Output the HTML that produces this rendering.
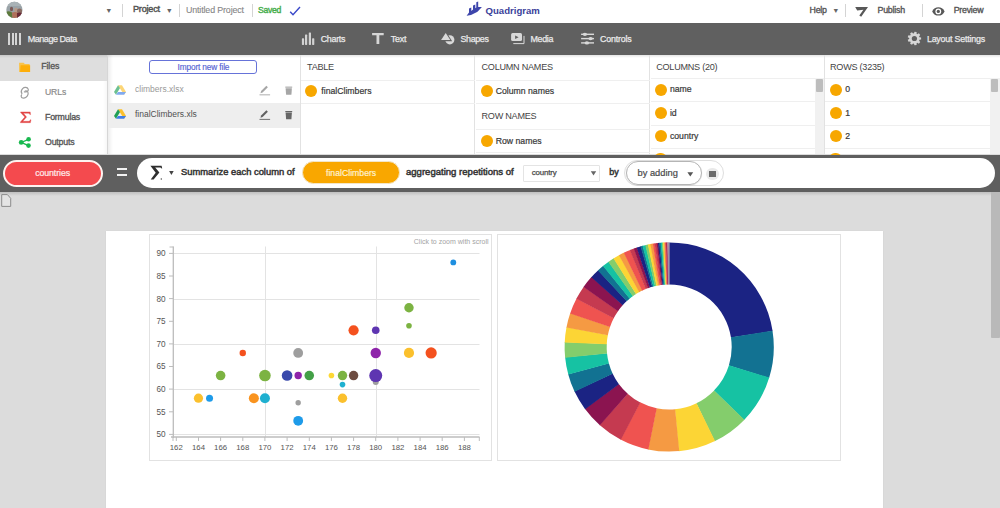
<!DOCTYPE html>
<html><head><meta charset="utf-8">
<style>
*{margin:0;padding:0;box-sizing:border-box}
html,body{width:1000px;height:508px;overflow:hidden;background:#dcdcdc;font-family:"Liberation Sans",sans-serif;position:relative}
.a{position:absolute}
.t{position:absolute;white-space:nowrap;line-height:1}
svg{position:absolute;overflow:visible}
</style></head><body>
<div class="a" style="left:0px;top:0px;width:1000px;height:23px;background:#fff"></div>
<svg style="left:0;top:0" width="40" height="24"><defs><clipPath id="av"><circle cx="14.4" cy="9.9" r="8.1"/></clipPath></defs><g clip-path="url(#av)"><rect x="5" y="1" width="19" height="18" fill="#9aa3a8"/><rect x="5" y="1" width="19" height="5" fill="#a9b2b6"/><ellipse cx="11.5" cy="9" rx="1.6" ry="2.2" fill="#7a5a58"/><ellipse cx="16" cy="10" rx="1.8" ry="2.2" fill="#b89a88"/><ellipse cx="19.5" cy="11" rx="2.5" ry="2.5" fill="#8a6a60"/><path d="M5 12 Q9 10.5 12 12.5 L13 19 H5 Z" fill="#5d7a3c"/><path d="M12 12.5 Q15 11.5 18 12.5 L18 19 H12.5 Z" fill="#b0705a"/><path d="M17 13 Q20 12 23 13.5 V19 H17 Z" fill="#6a2a35"/></g></svg>
<div class="t" style="left:105.30px;top:7.20px;font-size:7.2px;color:#666;font-weight:normal;">&#9660;</div>
<div class="a" style="left:122px;top:4px;width:1px;height:13px;background:#d4d4d4"></div>
<div class="t" style="left:133.00px;top:5.39px;font-size:9.1px;color:#555;font-weight:normal;-webkit-text-stroke:0.45px #555;letter-spacing:-0.2px">Project</div>
<div class="t" style="left:165.80px;top:7.40px;font-size:7.2px;color:#666;font-weight:normal;">&#9660;</div>
<div class="a" style="left:179px;top:4px;width:1px;height:13px;background:#d4d4d4"></div>
<div class="t" style="left:186.00px;top:5.70px;font-size:8.85px;color:#858585;font-weight:normal;letter-spacing:-0.13px;-webkit-text-stroke:0.1px #858585">Untitled Project</div>
<div class="a" style="left:252px;top:4px;width:1px;height:13px;background:#d4d4d4"></div>
<div class="t" style="left:258.00px;top:6.42px;font-size:8.6px;color:#45ad4a;font-weight:normal;-webkit-text-stroke:0.4px #45ad4a;letter-spacing:-0.25px">Saved</div>
<svg style="left:289px;top:6px" width="12" height="10" viewBox="0 0 12 10"><path d="M1.2 5.8 L4 8.8 L11 1" fill="none" stroke="#3a49c9" stroke-width="1.4"/></svg>
<svg style="left:0;top:0" width="1000" height="508"><path d="M466.6 15.7 L469 12.6 V8.4 L471.3 7.6 V10.9 L473 9.6 V5.6 L475.3 4.6 V8.3 L476.3 7.4 V2.3 L478.2 1.5 V7 L481.9 7.1 L477.5 11.8 L471 15 Z" fill="#3d45ab"/></svg>
<div class="t" style="left:485.50px;top:6.37px;font-size:9.6px;color:#3b3f9a;font-weight:bold;">Quadrigram</div>
<div class="t" style="left:809.50px;top:5.75px;font-size:8.8px;color:#555;font-weight:normal;-webkit-text-stroke:0.35px #555;letter-spacing:-0.2px">Help</div>
<div class="t" style="left:832.30px;top:7.40px;font-size:7.2px;color:#666;font-weight:normal;">&#9660;</div>
<div class="a" style="left:845px;top:4px;width:1px;height:13px;background:#d4d4d4"></div>
<svg style="left:0;top:0" width="1000" height="508"><path d="M855.2 7.1 L868 7.1 L861.2 16.8 L859.3 15.4 L863.4 9.7 L857.2 10.6 Z" fill="#585858"/></svg>
<div class="t" style="left:877.50px;top:5.75px;font-size:8.8px;color:#555;font-weight:normal;-webkit-text-stroke:0.35px #555;letter-spacing:-0.2px">Publish</div>
<div class="a" style="left:922px;top:4px;width:1px;height:13px;background:#d4d4d4"></div>
<svg style="left:0;top:0" width="1000" height="508"><path d="M932.2 11.4 C934.5 5.8 942.2 5.8 944.6 11.4 C942.2 17 934.5 17 932.2 11.4 Z" fill="#585858"/><circle cx="938.3" cy="11.4" r="2.9" fill="#fff"/><circle cx="938.3" cy="11.4" r="1.6" fill="#585858"/></svg>
<div class="t" style="left:953.75px;top:5.75px;font-size:8.8px;color:#555;font-weight:normal;-webkit-text-stroke:0.35px #555;letter-spacing:-0.25px">Preview</div>
<div class="a" style="left:0px;top:23px;width:1000px;height:32px;background:#606060"></div>
<div class="a" style="left:8.2px;top:33px;width:1.9px;height:12.2px;background:#d4d4d4"></div>
<div class="a" style="left:12.0px;top:33px;width:1.9px;height:12.2px;background:#d4d4d4"></div>
<div class="a" style="left:15.3px;top:33px;width:1.9px;height:12.2px;background:#d4d4d4"></div>
<div class="a" style="left:18.9px;top:33px;width:1.9px;height:12.2px;background:#d4d4d4"></div>
<div class="t" style="left:27.70px;top:34.98px;font-size:9.0px;color:#ececec;font-weight:normal;-webkit-text-stroke:0.25px #e8e8e8;letter-spacing:-0.45px">Manage Data</div>
<svg style="left:0;top:0" width="1000" height="508"><g fill="#d2d2d2"><rect x="301.9" y="38.3" width="2.2" height="6.6" rx="0.6"/><rect x="305" y="34.6" width="2.2" height="10.3" rx="0.6"/><rect x="308.8" y="32.4" width="2.2" height="12.5" rx="0.6"/><rect x="312.1" y="38.3" width="2.2" height="6.6" rx="0.6"/></g></svg>
<div class="t" style="left:320.75px;top:35.06px;font-size:8.9px;color:#ececec;font-weight:normal;-webkit-text-stroke:0.25px #e8e8e8;letter-spacing:-0.3px">Charts</div>
<svg style="left:372px;top:32px" width="12" height="13" viewBox="0 0 12 13"><path d="M0.1 1 H11.7 V3.3 H7.3 V11.9 H4.5 V3.3 H0.1 Z" fill="#d6d6d6"/></svg>
<div class="t" style="left:390.75px;top:35.06px;font-size:8.9px;color:#ececec;font-weight:normal;-webkit-text-stroke:0.25px #e8e8e8;letter-spacing:-0.2px">Text</div>
<svg style="left:0;top:0" width="1000" height="508"><defs><mask id="shm"><rect x="430" y="25" width="40" height="30" fill="#fff"/><path d="M445.7 31.2 L439.2 41.3 H452.2 Z" fill="#000"/></mask></defs><path d="M445.7 32.9 L441.1 39.9 H450.3 Z" fill="#d9d9d9"/><circle cx="449.8" cy="39.8" r="4.6" fill="#d9d9d9" mask="url(#shm)"/></svg>
<div class="t" style="left:460.50px;top:35.06px;font-size:8.9px;color:#ececec;font-weight:normal;-webkit-text-stroke:0.25px #e8e8e8;letter-spacing:-0.35px">Shapes</div>
<svg style="left:0;top:0" width="1000" height="508"><rect x="511.1" y="33.1" width="10.9" height="7.9" rx="1.5" fill="#d9d9d9"/><path d="M515.1 35.6 L518.6 37.3 L515.1 39.1 Z" fill="#606060"/><path d="M524 35.9 V43.6 H513.3" fill="none" stroke="#d9d9d9" stroke-width="1"/></svg>
<div class="t" style="left:530.50px;top:35.06px;font-size:8.9px;color:#ececec;font-weight:normal;-webkit-text-stroke:0.25px #e8e8e8;letter-spacing:-0.3px">Media</div>
<svg style="left:0;top:0" width="1000" height="508"><g fill="#d9d9d9"><rect x="581.1" y="33.6" width="12.9" height="1.4"/><rect x="581.1" y="37.9" width="12.9" height="1.4"/><rect x="581.1" y="42.2" width="12.9" height="1.4"/><ellipse cx="584.9" cy="34.3" rx="2.2" ry="1.6"/><ellipse cx="590.6" cy="38.6" rx="2.2" ry="1.6"/><ellipse cx="586.9" cy="42.9" rx="2.2" ry="1.6"/></g></svg>
<div class="t" style="left:600.00px;top:35.06px;font-size:8.9px;color:#ececec;font-weight:normal;-webkit-text-stroke:0.25px #e8e8e8;letter-spacing:-0.2px">Controls</div>
<svg style="left:0;top:0" width="1000" height="508"><path d="M919.43 37.16 L921.11 37.42 L921.11 39.58 L919.43 39.84 L919.11 40.71 L920.24 41.99 L918.85 43.65 L917.39 42.75 L916.59 43.22 L916.63 44.92 L914.50 45.30 L913.96 43.68 L913.05 43.52 L911.98 44.86 L910.11 43.77 L910.73 42.18 L910.14 41.47 L908.46 41.81 L907.72 39.78 L909.22 38.96 L909.22 38.04 L907.72 37.22 L908.46 35.19 L910.14 35.53 L910.73 34.82 L910.11 33.23 L911.98 32.14 L913.05 33.48 L913.96 33.32 L914.50 31.70 L916.63 32.08 L916.59 33.78 L917.39 34.25 L918.85 33.35 L920.24 35.01 L919.11 36.29Z" fill="#d6d6d6"/><circle cx="914.4" cy="38.5" r="2.6" fill="#606060"/></svg>
<div class="t" style="left:926.90px;top:35.06px;font-size:8.9px;color:#ececec;font-weight:normal;-webkit-text-stroke:0.25px #e8e8e8;letter-spacing:-0.2px">Layout Settings</div>
<div class="a" style="left:0px;top:55px;width:1000px;height:99px;background:#fff"></div>
<div class="a" style="left:0px;top:55px;width:107px;height:26px;background:#dedede"></div>
<div class="a" style="left:0px;top:55px;width:1000px;height:3px;background:linear-gradient(180deg,rgba(0,0,0,0.10),rgba(0,0,0,0))"></div>
<div class="a" style="left:107px;top:55px;width:1px;height:99px;background:#d6d6d6"></div>
<div class="a" style="left:108px;top:55px;width:5px;height:99px;background:linear-gradient(90deg,rgba(0,0,0,0.07),rgba(0,0,0,0))"></div>
<div class="a" style="left:103px;top:81px;width:4px;height:73px;background:linear-gradient(90deg,rgba(0,0,0,0),rgba(0,0,0,0.03))"></div>
<svg style="left:0;top:0" width="40" height="100"><path d="M19.1 62.7 H23.6 L24.8 64 H29.6 V72 H19.1 Z" fill="#f9c34a"/><path d="M20.6 65.3 H30.1 V72 H20.1 Z" fill="#fdae0a"/></svg>
<div class="t" style="left:41.20px;top:62.35px;font-size:8.8px;color:#575757;font-weight:normal;-webkit-text-stroke:0.35px #575757;letter-spacing:-0.1px">Files</div>
<svg style="left:0;top:0" width="40" height="120"><g fill="none" stroke="#9e9e9e" stroke-width="1.2" stroke-linecap="round"><path d="M21.9 93.6 C20.9 92.2 21.3 90 22.6 88.6 C24.3 86.8 27.4 87 28.2 89.1 C28.7 90.5 27.6 91.8 25.6 91.9 L24.3 91.8"/><path d="M25.2 91 C26.9 90.6 28.6 91.9 28.1 94.2 C27.6 96.7 24.9 98.6 22.6 98 C21 97.5 20.9 95.8 21.6 94.8"/></g></svg>
<div class="t" style="left:45.00px;top:88.12px;font-size:8.6px;color:#8a8a8a;font-weight:normal;-webkit-text-stroke:0.2px #8a8a8a;letter-spacing:-0.1px">URLs</div>
<svg style="left:0;top:0" width="1000" height="508"><path d="M20.6 111.9 H30.2 L30.6 114.6 H29.9 C29.6 113.6 29 113.3 28 113.3 H23.4 L26.6 117.1 L22.8 121.3 H28.3 C29.3 121.3 29.9 120.8 30.3 119.8 H31 L30.4 122.7 H20.4 V122 L24.8 117.1 L20.6 112.6 Z" fill="#e24545" stroke="#e24545" stroke-width="0.35"/></svg>
<div class="t" style="left:45.00px;top:112.95px;font-size:8.8px;color:#575757;font-weight:normal;-webkit-text-stroke:0.35px #575757;letter-spacing:-0.2px">Formulas</div>
<svg style="left:0;top:0" width="40" height="160"><g fill="#19b94f"><circle cx="28.6" cy="139.3" r="2.3"/><circle cx="21.2" cy="142.4" r="2.4"/><circle cx="28.5" cy="145.6" r="2.3"/></g><path d="M28.6 139.3 L21.2 142.4 L28.5 145.6" fill="none" stroke="#19b94f" stroke-width="1.3"/></svg>
<div class="t" style="left:45.00px;top:137.75px;font-size:8.8px;color:#575757;font-weight:normal;-webkit-text-stroke:0.35px #575757;letter-spacing:-0.2px">Outputs</div>
<div class="a" style="left:149px;top:60px;width:108.3px;height:13.6px;border:1.3px solid #6673d9;border-radius:3px"></div>
<div class="t" style="left:177.60px;top:62.77px;font-size:8.3px;color:#5563d3;font-weight:normal;letter-spacing:-0.15px;-webkit-text-stroke:0.15px #5563d3">Import new file</div>
<div class="a" style="left:108px;top:102.8px;width:192px;height:25.2px;background:#eeeeee"></div>
<svg style="left:114px;top:84.5px;opacity:0.65" width="12" height="10" viewBox="0 0 12 10"><path d="M4 0.3 H8 L12 7 L10 9.7 Z" fill="#fbc02d"/><path d="M4 0.3 L0 7 L2 9.7 L6 3 Z" fill="#1e9f55"/><path d="M2 9.7 H10 L12 7 H4 Z" fill="#3f7ee8"/></svg>
<div class="t" style="left:135.00px;top:84.80px;font-size:8.5px;color:#9a9a9a;font-weight:normal;">climbers.xlsx</div>
<svg style="left:114px;top:108.5px;opacity:1" width="12" height="10" viewBox="0 0 12 10"><path d="M4 0.3 H8 L12 7 L10 9.7 Z" fill="#fbc02d"/><path d="M4 0.3 L0 7 L2 9.7 L6 3 Z" fill="#1e9f55"/><path d="M2 9.7 H10 L12 7 H4 Z" fill="#3f7ee8"/></svg>
<div class="t" style="left:135.00px;top:109.60px;font-size:8.5px;color:#505050;font-weight:normal;">finalClimbers.xls</div>
<svg style="left:0;top:0" width="300" height="140"><path d="M261.1 91.1 L266.4 85.8 L267.9 87.3 L262.6 92.6 L260.5 93.2 Z" fill="#a6a6a6"/><rect x="259.5" y="94.39999999999999" width="10.6" height="0.9" fill="#a6a6a6"/></svg>
<svg style="left:0;top:0" width="300" height="140"><rect x="285.3" y="86.6" width="6.9" height="1.1" fill="#a6a6a6"/><path d="M285.6 88.19999999999999 H291.90000000000003 L291.40000000000003 94.8 H286.1 Z" fill="#a6a6a6"/></svg>
<svg style="left:0;top:0" width="300" height="140"><path d="M261.1 115.6 L266.4 110.3 L267.9 111.8 L262.6 117.1 L260.5 117.7 Z" fill="#616161"/><rect x="259.5" y="118.89999999999999" width="10.6" height="0.9" fill="#616161"/></svg>
<svg style="left:0;top:0" width="300" height="140"><rect x="285.3" y="111" width="6.9" height="1.1" fill="#666"/><path d="M285.6 112.6 H291.90000000000003 L291.40000000000003 119.2 H286.1 Z" fill="#666"/></svg>
<div class="a" style="left:300px;top:55px;width:1px;height:99px;background:#e2e2e2"></div>
<div class="a" style="left:474px;top:55px;width:1px;height:99px;background:#e2e2e2"></div>
<div class="a" style="left:649px;top:55px;width:1px;height:99px;background:#e2e2e2"></div>
<div class="a" style="left:824px;top:55px;width:1px;height:99px;background:#e2e2e2"></div>
<div class="t" style="left:307.00px;top:62.99px;font-size:9.1px;color:#444;font-weight:normal;letter-spacing:-0.25px">TABLE</div>
<div class="a" style="left:301px;top:79.5px;width:173.5px;height:1px;background:#efefef"></div>
<div class="a" style="left:305.3px;top:85.2px;width:12px;height:12px;border-radius:50%;background:#f7a700"></div>
<div class="t" style="left:321.30px;top:87.03px;font-size:8.7px;color:#383838;font-weight:normal;-webkit-text-stroke:0.2px #383838">finalClimbers</div>
<div class="a" style="left:301px;top:103.3px;width:173.5px;height:1px;background:#efefef"></div>
<div class="t" style="left:481.50px;top:62.99px;font-size:9.1px;color:#444;font-weight:normal;letter-spacing:-0.25px">COLUMN NAMES</div>
<div class="a" style="left:475.5px;top:79.5px;width:174px;height:1px;background:#efefef"></div>
<div class="a" style="left:480.5px;top:85.2px;width:12px;height:12px;border-radius:50%;background:#f7a700"></div>
<div class="t" style="left:495.70px;top:87.03px;font-size:8.7px;color:#383838;font-weight:normal;-webkit-text-stroke:0.2px #383838">Column names</div>
<div class="a" style="left:475.5px;top:103.3px;width:174px;height:1px;background:#efefef"></div>
<div class="t" style="left:481.50px;top:112.49px;font-size:9.1px;color:#444;font-weight:normal;letter-spacing:-0.25px">ROW NAMES</div>
<div class="a" style="left:475.5px;top:129.1px;width:174px;height:1px;background:#efefef"></div>
<div class="a" style="left:480.5px;top:135.2px;width:12px;height:12px;border-radius:50%;background:#f7a700"></div>
<div class="t" style="left:495.70px;top:136.93px;font-size:8.7px;color:#383838;font-weight:normal;-webkit-text-stroke:0.2px #383838">Row names</div>
<div class="a" style="left:475.5px;top:152.3px;width:174px;height:1px;background:#efefef"></div>
<div class="t" style="left:656.20px;top:62.99px;font-size:9.1px;color:#444;font-weight:normal;letter-spacing:-0.25px">COLUMNS (20)</div>
<div class="a" style="left:650.5px;top:77.8px;width:173.5px;height:1px;background:#efefef"></div>
<div class="a" style="left:654.5px;top:83.6px;width:12px;height:12px;border-radius:50%;background:#f7a700"></div>
<div class="t" style="left:669.90px;top:85.43px;font-size:8.7px;color:#383838;font-weight:normal;-webkit-text-stroke:0.2px #383838">name</div>
<div class="a" style="left:650.5px;top:101.1px;width:165px;height:1px;background:#efefef"></div>
<div class="a" style="left:654.5px;top:107.0px;width:12px;height:12px;border-radius:50%;background:#f7a700"></div>
<div class="t" style="left:669.90px;top:108.83px;font-size:8.7px;color:#383838;font-weight:normal;-webkit-text-stroke:0.2px #383838">id</div>
<div class="a" style="left:650.5px;top:124.5px;width:165px;height:1px;background:#efefef"></div>
<div class="a" style="left:654.5px;top:130.4px;width:12px;height:12px;border-radius:50%;background:#f7a700"></div>
<div class="t" style="left:669.90px;top:132.23px;font-size:8.7px;color:#383838;font-weight:normal;-webkit-text-stroke:0.2px #383838">country</div>
<div class="a" style="left:650.5px;top:147.9px;width:165px;height:1px;background:#efefef"></div>
<div class="a" style="left:654.2px;top:152.5px;width:12.6px;height:12.6px;border-radius:50%;background:#f6a800"></div>
<div class="a" style="left:815px;top:78px;width:9px;height:76px;background:#f1f1f1"></div>
<div class="a" style="left:815.5px;top:79px;width:7.5px;height:12.5px;background:#bdbdbd;border-radius:1px"></div>
<div class="t" style="left:830.00px;top:62.99px;font-size:9.1px;color:#444;font-weight:normal;letter-spacing:-0.25px">ROWS (3235)</div>
<div class="a" style="left:825px;top:77.8px;width:175px;height:1px;background:#efefef"></div>
<div class="a" style="left:829.6999999999999px;top:83.6px;width:12px;height:12px;border-radius:50%;background:#f7a700"></div>
<div class="t" style="left:845.20px;top:85.43px;font-size:8.7px;color:#383838;font-weight:normal;-webkit-text-stroke:0.2px #383838">0</div>
<div class="a" style="left:825px;top:101.1px;width:165px;height:1px;background:#efefef"></div>
<div class="a" style="left:829.6999999999999px;top:107.0px;width:12px;height:12px;border-radius:50%;background:#f7a700"></div>
<div class="t" style="left:845.20px;top:108.83px;font-size:8.7px;color:#383838;font-weight:normal;-webkit-text-stroke:0.2px #383838">1</div>
<div class="a" style="left:825px;top:124.5px;width:165px;height:1px;background:#efefef"></div>
<div class="a" style="left:829.6999999999999px;top:130.4px;width:12px;height:12px;border-radius:50%;background:#f7a700"></div>
<div class="t" style="left:845.20px;top:132.23px;font-size:8.7px;color:#383838;font-weight:normal;-webkit-text-stroke:0.2px #383838">2</div>
<div class="a" style="left:825px;top:147.9px;width:165px;height:1px;background:#efefef"></div>
<div class="a" style="left:829.4px;top:152.5px;width:12.6px;height:12.6px;border-radius:50%;background:#f6a800"></div>
<div class="a" style="left:990px;top:78px;width:10px;height:76px;background:#f1f1f1"></div>
<div class="a" style="left:990.5px;top:79px;width:7.5px;height:12.5px;background:#bdbdbd;border-radius:1px"></div>
<div class="a" style="left:0px;top:191.5px;width:1000px;height:4px;background:linear-gradient(180deg,rgba(0,0,0,0.13),rgba(0,0,0,0))"></div>
<div class="a" style="left:0px;top:154.5px;width:1000px;height:37px;background:#5f5f5f"></div>
<div class="a" style="left:2.5px;top:160px;width:100.5px;height:26.5px;border-radius:14px;background:#f44a4e;border:2.2px solid #fdf2ef"></div>
<div class="t" style="left:35.20px;top:168.55px;font-size:8.8px;color:#ffecec;font-weight:normal;-webkit-text-stroke:0.2px #ffecec;letter-spacing:-0.1px">countries</div>
<div class="a" style="left:116.5px;top:168px;width:10.5px;height:2.2px;background:#f2f2f2"></div>
<div class="a" style="left:116.5px;top:173.6px;width:10.5px;height:2.2px;background:#f2f2f2"></div>
<div class="a" style="left:136.5px;top:158.3px;width:858.7px;height:29.8px;border-radius:15px;background:#fff"></div>
<svg style="left:0;top:0" width="1000" height="508"><path d="M150.4 165.7 H161.6 L162.2 168.6 H161.5 C161.2 167.6 160.6 167.4 159.5 167.4 H155.2 L159.4 172.6 L153.6 179.5 H150.7 L155.7 172.8 Z" fill="#2e2e2e"/><circle cx="161.3" cy="179" r="0.7" fill="#444"/><path d="M169.1 171 H173.7 L171.4 175.1 Z" fill="#444"/></svg>
<div class="t" style="left:181.00px;top:167.34px;font-size:9.4px;color:#363636;font-weight:normal;-webkit-text-stroke:0.5px #363636">Summarize each column of</div>
<div class="a" style="left:301.5px;top:160.5px;width:98.5px;height:23px;border-radius:12px;background:#f9a700;border:1.2px solid #f3e6c8"></div>
<div class="t" style="left:326.00px;top:168.63px;font-size:8.7px;color:#fff2d0;font-weight:normal;-webkit-text-stroke:0.2px #fff2d0">finalClimbers</div>
<div class="t" style="left:406.00px;top:167.21px;font-size:9.55px;color:#363636;font-weight:normal;-webkit-text-stroke:0.5px #363636">aggregating repetitions of</div>
<div class="a" style="left:523px;top:164.5px;width:76.5px;height:17px;background:#fff;border:1px solid #e4e4e4;border-radius:1px"></div>
<div class="t" style="left:531.70px;top:169.11px;font-size:7.9px;color:#4a4a4a;font-weight:normal;-webkit-text-stroke:0.25px #4a4a4a;letter-spacing:-0.15px">country</div>
<svg style="left:0;top:0" width="1000" height="508"><path d="M590.8 171.3 H596.2 L593.5 175.5 Z" fill="#666"/><path d="M687.4 172.3 H693.2 L690.3 176.4 Z" fill="#555"/></svg>
<div class="t" style="left:609.20px;top:167.68px;font-size:9.0px;color:#363636;font-weight:normal;-webkit-text-stroke:0.5px #363636">by</div>
<div class="a" style="left:624px;top:159.5px;width:100px;height:26px;border-radius:13px;background:#fff;border:1px solid #dedede"></div>
<div class="a" style="left:625.8px;top:160.5px;width:76.5px;height:24px;border-radius:12px;background:#fff;border:1px solid #b5b5b5;box-shadow:0 0.5px 1px rgba(0,0,0,0.12)"></div>
<div class="t" style="left:637.50px;top:168.72px;font-size:9.3px;color:#4a4a4a;font-weight:normal;-webkit-text-stroke:0.2px #4a4a4a">by adding</div>
<svg style="left:0;top:0" width="1000" height="508"><path d="M687.4 172.3 H693.2 L690.3 176.4 Z" fill="#555"/></svg>
<div class="a" style="left:706px;top:167.5px;width:12.5px;height:12.5px;border-radius:50%;background:#e9e9e9"></div>
<div class="a" style="left:709px;top:170.5px;width:6.5px;height:6.5px;background:#6a6a6a"></div>
<svg style="left:0;top:0" width="40" height="240"><path d="M1.7 194.6 H7.4 L10.7 198.3 V206.4 H1.7 Z" fill="#e4e4e4" stroke="#8c8c8c" stroke-width="1"/></svg>
<div class="a" style="left:991.3px;top:192px;width:8.7px;height:145.7px;background:#b9b9b9;border-radius:0 0 1px 1px"></div>
<div class="a" style="left:106px;top:231px;width:777px;height:278px;background:#fff;box-shadow:0 -0.5px 1.5px rgba(0,0,0,0.08)"></div>
<div class="a" style="left:148.5px;top:234px;width:343.5px;height:226.5px;background:#fff;border:1px solid #e2e2e2"></div>
<div class="a" style="left:496.5px;top:234px;width:344px;height:226.5px;background:#fff;border:1px solid #e2e2e2"></div>
<svg style="left:0;top:0" width="1000" height="508"><line x1="173" y1="434.5" x2="479.5" y2="434.5" stroke="#e3e3e3" stroke-width="1"/><line x1="173" y1="389.5" x2="479.5" y2="389.5" stroke="#e3e3e3" stroke-width="1"/><line x1="173" y1="344.5" x2="479.5" y2="344.5" stroke="#e3e3e3" stroke-width="1"/><line x1="173" y1="299.5" x2="479.5" y2="299.5" stroke="#e3e3e3" stroke-width="1"/><line x1="173" y1="253.5" x2="479.5" y2="253.5" stroke="#e3e3e3" stroke-width="1"/><line x1="265.5" y1="246.5" x2="265.5" y2="437" stroke="#e3e3e3" stroke-width="1"/><line x1="376.5" y1="246.5" x2="376.5" y2="437" stroke="#e3e3e3" stroke-width="1"/><line x1="173.3" y1="246.5" x2="173.3" y2="438" stroke="#bcbcbc" stroke-width="1.3"/><line x1="169.5" y1="247" x2="173.5" y2="247" stroke="#bcbcbc" stroke-width="1"/><line x1="171" y1="437" x2="479.5" y2="437" stroke="#bcbcbc" stroke-width="1.3"/><line x1="169" y1="434.4" x2="173" y2="434.4" stroke="#bcbcbc" stroke-width="1"/><text x="165.6" y="437.3" text-anchor="end" font-size="8.2" fill="#555" font-family="Liberation Sans">50</text><line x1="169" y1="411.8" x2="173" y2="411.8" stroke="#bcbcbc" stroke-width="1"/><text x="165.6" y="414.7" text-anchor="end" font-size="8.2" fill="#555" font-family="Liberation Sans">55</text><line x1="169" y1="389.1" x2="173" y2="389.1" stroke="#bcbcbc" stroke-width="1"/><text x="165.6" y="392.0" text-anchor="end" font-size="8.2" fill="#555" font-family="Liberation Sans">60</text><line x1="169" y1="366.5" x2="173" y2="366.5" stroke="#bcbcbc" stroke-width="1"/><text x="165.6" y="369.4" text-anchor="end" font-size="8.2" fill="#555" font-family="Liberation Sans">65</text><line x1="169" y1="343.9" x2="173" y2="343.9" stroke="#bcbcbc" stroke-width="1"/><text x="165.6" y="346.8" text-anchor="end" font-size="8.2" fill="#555" font-family="Liberation Sans">70</text><line x1="169" y1="321.3" x2="173" y2="321.3" stroke="#bcbcbc" stroke-width="1"/><text x="165.6" y="324.2" text-anchor="end" font-size="8.2" fill="#555" font-family="Liberation Sans">75</text><line x1="169" y1="298.6" x2="173" y2="298.6" stroke="#bcbcbc" stroke-width="1"/><text x="165.6" y="301.5" text-anchor="end" font-size="8.2" fill="#555" font-family="Liberation Sans">80</text><line x1="169" y1="276.0" x2="173" y2="276.0" stroke="#bcbcbc" stroke-width="1"/><text x="165.6" y="278.9" text-anchor="end" font-size="8.2" fill="#555" font-family="Liberation Sans">85</text><line x1="169" y1="253.4" x2="173" y2="253.4" stroke="#bcbcbc" stroke-width="1"/><text x="165.6" y="256.3" text-anchor="end" font-size="8.2" fill="#555" font-family="Liberation Sans">90</text><line x1="176.3" y1="437" x2="176.3" y2="441" stroke="#bcbcbc" stroke-width="1"/><text x="176.3" y="450.0" text-anchor="middle" font-size="7.8" fill="#555" font-family="Liberation Sans">162</text><line x1="198.5" y1="437" x2="198.5" y2="441" stroke="#bcbcbc" stroke-width="1"/><text x="198.5" y="450.0" text-anchor="middle" font-size="7.8" fill="#555" font-family="Liberation Sans">164</text><line x1="220.6" y1="437" x2="220.6" y2="441" stroke="#bcbcbc" stroke-width="1"/><text x="220.6" y="450.0" text-anchor="middle" font-size="7.8" fill="#555" font-family="Liberation Sans">166</text><line x1="242.8" y1="437" x2="242.8" y2="441" stroke="#bcbcbc" stroke-width="1"/><text x="242.8" y="450.0" text-anchor="middle" font-size="7.8" fill="#555" font-family="Liberation Sans">168</text><line x1="264.9" y1="437" x2="264.9" y2="441" stroke="#bcbcbc" stroke-width="1"/><text x="264.9" y="450.0" text-anchor="middle" font-size="7.8" fill="#555" font-family="Liberation Sans">170</text><line x1="287.1" y1="437" x2="287.1" y2="441" stroke="#bcbcbc" stroke-width="1"/><text x="287.1" y="450.0" text-anchor="middle" font-size="7.8" fill="#555" font-family="Liberation Sans">172</text><line x1="309.3" y1="437" x2="309.3" y2="441" stroke="#bcbcbc" stroke-width="1"/><text x="309.3" y="450.0" text-anchor="middle" font-size="7.8" fill="#555" font-family="Liberation Sans">174</text><line x1="331.4" y1="437" x2="331.4" y2="441" stroke="#bcbcbc" stroke-width="1"/><text x="331.4" y="450.0" text-anchor="middle" font-size="7.8" fill="#555" font-family="Liberation Sans">176</text><line x1="353.6" y1="437" x2="353.6" y2="441" stroke="#bcbcbc" stroke-width="1"/><text x="353.6" y="450.0" text-anchor="middle" font-size="7.8" fill="#555" font-family="Liberation Sans">178</text><line x1="375.7" y1="437" x2="375.7" y2="441" stroke="#bcbcbc" stroke-width="1"/><text x="375.7" y="450.0" text-anchor="middle" font-size="7.8" fill="#555" font-family="Liberation Sans">180</text><line x1="397.9" y1="437" x2="397.9" y2="441" stroke="#bcbcbc" stroke-width="1"/><text x="397.9" y="450.0" text-anchor="middle" font-size="7.8" fill="#555" font-family="Liberation Sans">182</text><line x1="420.1" y1="437" x2="420.1" y2="441" stroke="#bcbcbc" stroke-width="1"/><text x="420.1" y="450.0" text-anchor="middle" font-size="7.8" fill="#555" font-family="Liberation Sans">184</text><line x1="442.2" y1="437" x2="442.2" y2="441" stroke="#bcbcbc" stroke-width="1"/><text x="442.2" y="450.0" text-anchor="middle" font-size="7.8" fill="#555" font-family="Liberation Sans">186</text><line x1="464.4" y1="437" x2="464.4" y2="441" stroke="#bcbcbc" stroke-width="1"/><text x="464.4" y="450.0" text-anchor="middle" font-size="7.8" fill="#555" font-family="Liberation Sans">188</text><line x1="173" y1="437" x2="173" y2="441" stroke="#bcbcbc" stroke-width="1"/><line x1="479.3" y1="437" x2="479.3" y2="441" stroke="#bcbcbc" stroke-width="1"/><text x="488.5" y="243.8" text-anchor="end" font-size="7.0" fill="#a4a4a4" font-family="Liberation Sans">Click to zoom with scroll</text><circle cx="242.78" cy="352.95" r="3.2" fill="#f4511e"/><circle cx="220.62" cy="375.57" r="4.8" fill="#7cb342"/><circle cx="264.94" cy="375.57" r="5.8" fill="#7cb342"/><circle cx="287.10" cy="375.57" r="5.3" fill="#3949ab"/><circle cx="298.18" cy="375.57" r="3.7" fill="#8e24aa"/><circle cx="309.26" cy="375.57" r="4.8" fill="#43a047"/><circle cx="298.18" cy="352.95" r="4.9" fill="#9e9e9e"/><circle cx="198.46" cy="398.20" r="4.6" fill="#fbc02d"/><circle cx="209.54" cy="398.20" r="3.5" fill="#1e9be9"/><circle cx="253.86" cy="398.20" r="5.0" fill="#f9931f"/><circle cx="264.94" cy="398.20" r="5.0" fill="#1fb0d0"/><circle cx="298.18" cy="402.72" r="2.7" fill="#9e9e9e"/><circle cx="298.18" cy="420.82" r="4.9" fill="#1e9be9"/><circle cx="453.30" cy="262.45" r="2.9" fill="#1e8fe0"/><circle cx="408.98" cy="307.70" r="4.7" fill="#7cb342"/><circle cx="408.98" cy="325.80" r="2.8" fill="#7cb342"/><circle cx="353.58" cy="330.32" r="5.1" fill="#f4511e"/><circle cx="375.74" cy="330.32" r="3.8" fill="#5e35b1"/><circle cx="375.74" cy="352.95" r="5.2" fill="#8e24aa"/><circle cx="408.98" cy="352.95" r="5.1" fill="#fbc02d"/><circle cx="431.14" cy="352.95" r="5.6" fill="#f4511e"/><circle cx="331.42" cy="375.57" r="2.8" fill="#fdd835"/><circle cx="342.50" cy="375.57" r="4.7" fill="#7cb342"/><circle cx="353.58" cy="375.57" r="4.7" fill="#6d4c41"/><circle cx="375.74" cy="381.91" r="3.0" fill="#9e9e9e"/><circle cx="375.74" cy="375.57" r="6.5" fill="#5e35b1"/><circle cx="342.50" cy="384.62" r="2.8" fill="#1fb0d0"/><circle cx="342.50" cy="398.20" r="4.7" fill="#fbc02d"/></svg>
<svg style="left:0;top:0" width="1000" height="508"><path d="M669.20 242.40 A104.6 104.6 0 0 1 772.58 331.09 L730.97 337.49 A62.5 62.5 0 0 0 669.20 284.50 Z" fill="#1b2383"/><path d="M772.51 330.64 A104.6 104.6 0 0 1 769.10 378.02 L728.89 365.53 A62.5 62.5 0 0 0 730.93 337.22 Z" fill="#127292"/><path d="M769.23 377.58 A104.6 104.6 0 0 1 744.13 419.99 L713.97 390.61 A62.5 62.5 0 0 0 728.97 365.27 Z" fill="#16c2a3"/><path d="M744.44 419.66 A104.6 104.6 0 0 1 714.64 441.21 L696.35 403.29 A62.5 62.5 0 0 0 714.16 390.42 Z" fill="#84cd6c"/><path d="M715.05 441.01 A104.6 104.6 0 0 1 678.77 451.16 L674.92 409.24 A62.5 62.5 0 0 0 696.60 403.17 Z" fill="#fcd535"/><path d="M679.23 451.12 A104.6 104.6 0 0 1 647.90 449.41 L656.47 408.19 A62.5 62.5 0 0 0 675.19 409.21 Z" fill="#f59a43"/><path d="M648.35 449.50 A104.6 104.6 0 0 1 620.50 439.57 L640.10 402.31 A62.5 62.5 0 0 0 656.74 408.25 Z" fill="#ef5350"/><path d="M620.90 439.78 A104.6 104.6 0 0 1 599.55 425.04 L627.58 393.63 A62.5 62.5 0 0 0 640.34 402.44 Z" fill="#c53a50"/><path d="M599.89 425.34 A104.6 104.6 0 0 1 584.85 408.85 L618.80 383.96 A62.5 62.5 0 0 0 627.79 393.81 Z" fill="#8b1450"/><path d="M585.12 409.22 A104.6 104.6 0 0 1 574.44 391.29 L612.58 373.46 A62.5 62.5 0 0 0 618.96 384.18 Z" fill="#1b2383"/><path d="M574.63 391.70 A104.6 104.6 0 0 1 568.19 374.16 L608.84 363.23 A62.5 62.5 0 0 0 612.69 373.71 Z" fill="#127292"/><path d="M568.31 374.60 A104.6 104.6 0 0 1 565.11 357.30 L607.00 353.15 A62.5 62.5 0 0 0 608.92 363.49 Z" fill="#16c2a3"/><path d="M565.15 357.75 A104.6 104.6 0 0 1 564.72 341.98 L606.77 344.00 A62.5 62.5 0 0 0 607.03 353.42 Z" fill="#84cd6c"/><path d="M564.70 342.44 A104.6 104.6 0 0 1 566.54 326.95 L607.86 335.02 A62.5 62.5 0 0 0 606.76 344.27 Z" fill="#fcd535"/><path d="M566.45 327.40 A104.6 104.6 0 0 1 570.27 313.03 L610.09 326.70 A62.5 62.5 0 0 0 607.81 335.29 Z" fill="#f59a43"/><path d="M570.12 313.46 A104.6 104.6 0 0 1 576.55 298.46 L613.84 318.00 A62.5 62.5 0 0 0 610.00 326.96 Z" fill="#ef5350"/><path d="M576.33 298.86 A104.6 104.6 0 0 1 583.78 286.63 L618.16 310.93 A62.5 62.5 0 0 0 613.71 318.24 Z" fill="#c53a50"/><path d="M583.52 287.00 A104.6 104.6 0 0 1 591.65 276.81 L622.86 305.06 A62.5 62.5 0 0 0 618.00 311.15 Z" fill="#8b1450"/><path d="M591.35 277.14 A104.6 104.6 0 0 1 598.20 270.19 L626.77 301.10 A62.5 62.5 0 0 0 622.68 305.26 Z" fill="#1b2383"/><path d="M597.86 270.50 A104.6 104.6 0 0 1 603.30 265.77 L629.83 298.46 A62.5 62.5 0 0 0 626.58 301.29 Z" fill="#127292"/><path d="M602.95 266.06 A104.6 104.6 0 0 1 608.68 261.68 L633.04 296.02 A62.5 62.5 0 0 0 629.61 298.63 Z" fill="#16c2a3"/><path d="M608.31 261.95 A104.6 104.6 0 0 1 613.85 258.25 L636.13 293.97 A62.5 62.5 0 0 0 632.82 296.18 Z" fill="#84cd6c"/><path d="M613.46 258.49 A104.6 104.6 0 0 1 619.37 255.03 L639.43 292.05 A62.5 62.5 0 0 0 635.90 294.11 Z" fill="#fcd535"/><path d="M618.97 255.25 A104.6 104.6 0 0 1 624.25 252.55 L642.34 290.56 A62.5 62.5 0 0 0 639.19 292.18 Z" fill="#f59a43"/><path d="M623.84 252.75 A104.6 104.6 0 0 1 630.27 249.91 L645.94 288.99 A62.5 62.5 0 0 0 642.10 290.68 Z" fill="#ef5350"/><path d="M629.85 250.09 A104.6 104.6 0 0 1 634.20 248.43 L648.29 288.10 A62.5 62.5 0 0 0 645.69 289.09 Z" fill="#c53a50"/><path d="M633.77 248.58 A104.6 104.6 0 0 1 637.14 247.44 L650.04 287.51 A62.5 62.5 0 0 0 648.03 288.19 Z" fill="#8b1450"/><path d="M636.70 247.58 A104.6 104.6 0 0 1 640.98 246.28 L652.34 286.82 A62.5 62.5 0 0 0 649.78 287.59 Z" fill="#1b2383"/><path d="M640.54 246.40 A104.6 104.6 0 0 1 642.92 245.75 L653.50 286.50 A62.5 62.5 0 0 0 652.08 286.89 Z" fill="#127292"/><path d="M642.48 245.87 A104.6 104.6 0 0 1 645.76 245.06 L655.19 286.09 A62.5 62.5 0 0 0 653.23 286.57 Z" fill="#16c2a3"/><path d="M645.31 245.16 A104.6 104.6 0 0 1 648.26 244.52 L656.69 285.77 A62.5 62.5 0 0 0 654.93 286.15 Z" fill="#84cd6c"/><path d="M647.81 244.61 A104.6 104.6 0 0 1 650.77 244.04 L658.19 285.48 A62.5 62.5 0 0 0 656.42 285.82 Z" fill="#fcd535"/><path d="M650.32 244.12 A104.6 104.6 0 0 1 653.29 243.62 L659.69 285.23 A62.5 62.5 0 0 0 657.92 285.53 Z" fill="#f59a43"/><path d="M652.84 243.69 A104.6 104.6 0 0 1 655.09 243.36 L660.77 285.07 A62.5 62.5 0 0 0 659.42 285.27 Z" fill="#ef5350"/><path d="M654.64 243.42 A104.6 104.6 0 0 1 657.09 243.10 L661.96 284.92 A62.5 62.5 0 0 0 660.50 285.11 Z" fill="#c53a50"/><path d="M656.63 243.16 A104.6 104.6 0 0 1 658.36 242.96 L662.72 284.84 A62.5 62.5 0 0 0 661.69 284.95 Z" fill="#8b1450"/><path d="M657.90 243.01 A104.6 104.6 0 0 1 659.63 242.84 L663.48 284.76 A62.5 62.5 0 0 0 662.45 284.87 Z" fill="#1b2383"/><path d="M659.17 242.88 A104.6 104.6 0 0 1 661.08 242.72 L664.35 284.69 A62.5 62.5 0 0 0 663.21 284.79 Z" fill="#127292"/><path d="M660.63 242.75 A104.6 104.6 0 0 1 662.36 242.62 L665.11 284.63 A62.5 62.5 0 0 0 664.08 284.71 Z" fill="#16c2a3"/><path d="M661.90 242.65 A104.6 104.6 0 0 1 663.45 242.56 L665.77 284.59 A62.5 62.5 0 0 0 664.84 284.65 Z" fill="#84cd6c"/><path d="M663.00 242.58 A104.6 104.6 0 0 1 664.55 242.50 L666.42 284.56 A62.5 62.5 0 0 0 665.49 284.61 Z" fill="#fcd535"/><path d="M664.09 242.52 A104.6 104.6 0 0 1 665.46 242.47 L666.96 284.54 A62.5 62.5 0 0 0 666.15 284.57 Z" fill="#f59a43"/><path d="M665.00 242.48 A104.6 104.6 0 0 1 666.37 242.44 L667.51 284.52 A62.5 62.5 0 0 0 666.69 284.55 Z" fill="#ef5350"/><path d="M665.91 242.45 A104.6 104.6 0 0 1 667.10 242.42 L667.95 284.51 A62.5 62.5 0 0 0 667.24 284.53 Z" fill="#c53a50"/><path d="M666.64 242.43 A104.6 104.6 0 0 1 667.83 242.41 L668.38 284.51 A62.5 62.5 0 0 0 667.67 284.52 Z" fill="#8b1450"/><path d="M667.37 242.42 A104.6 104.6 0 0 1 668.38 242.40 L668.71 284.50 A62.5 62.5 0 0 0 668.11 284.51 Z" fill="#d6b9c0"/><path d="M667.92 242.41 A104.6 104.6 0 0 1 668.93 242.40 L669.04 284.50 A62.5 62.5 0 0 0 668.44 284.50 Z" fill="#7a6a8a"/><path d="M668.47 242.40 A104.6 104.6 0 0 1 669.20 242.40 L669.20 284.50 A62.5 62.5 0 0 0 668.76 284.50 Z" fill="#bfa4b4"/><path d="M668.83 242.40 A104.6 104.6 0 0 1 669.20 242.40 L669.20 284.50 A62.5 62.5 0 0 0 668.98 284.50 Z" fill="#c8a0a8"/></svg>
</body></html>
